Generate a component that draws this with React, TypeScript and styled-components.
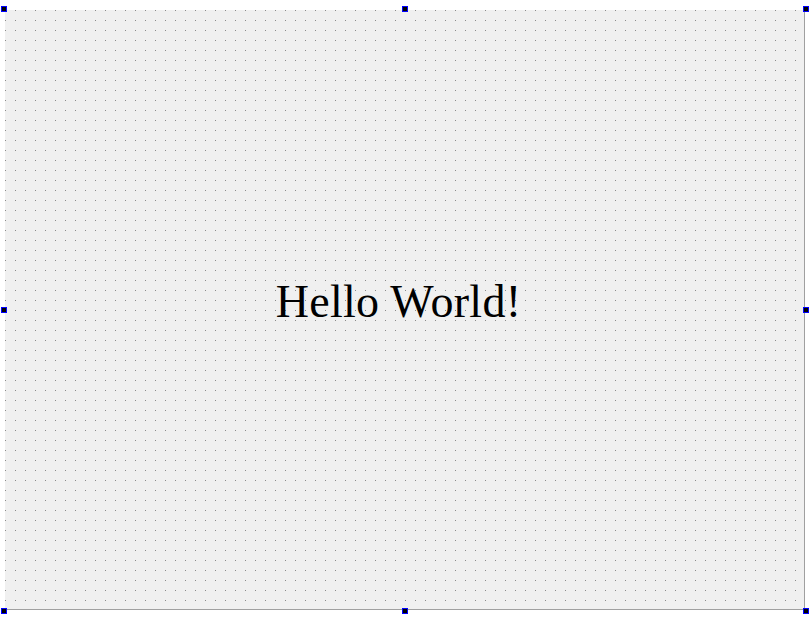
import React from 'react'
import styled, { createGlobalStyle } from 'styled-components'

const GlobalStyle = createGlobalStyle`
  html, body {
    margin: 0;
    padding: 0;
    background: #fff;
  }
`

const Workspace = styled.div`
  padding: 10px 0 0 5px;
  width: 812px;
  height: 618px;
  box-sizing: border-box;
  background: #fff;
`

const FormCanvas = styled.div`
  position: relative;
  width: 800px;
  height: 600px;
  display: flex;
  align-items: center;
  justify-content: center;
  padding: 0 12px 17px 0;
  box-sizing: border-box;
  border-right: 1px solid #a0a0a0;
  border-bottom: 1px solid #a0a0a0;
  background-color: #f0f0f0;
  background-image: linear-gradient(90deg, transparent 1px, #f0f0f0 1px),
    linear-gradient(180deg, #8a8a8a 1px, #f0f0f0 1px);
  background-size: 10px 10px;
  background-position: 0 0;
`

const Label = styled.span`
  font-family: 'Liberation Serif', 'Times New Roman', serif;
  font-size: 46px;
  letter-spacing: 0.3px;
  line-height: normal;
  color: #000;
`

const Handle = styled.span<{ $x: number; $y: number }>`
  position: absolute;
  left: ${(p) => p.$x}px;
  top: ${(p) => p.$y}px;
  width: 6px;
  height: 6px;
  box-sizing: border-box;
  border: 1px solid #0000ff;
  background: #000;
`

const handles = [
  { x: -4, y: -4 },
  { x: 397, y: -4 },
  { x: 798, y: -4 },
  { x: -4, y: 297 },
  { x: 798, y: 297 },
  { x: -4, y: 598 },
  { x: 397, y: 598 },
  { x: 798, y: 598 },
]

export default function App() {
  return (
    <>
      <GlobalStyle />
      <Workspace>
        <FormCanvas>
          <Label>Hello World!</Label>
          {handles.map((h, i) => (
            <Handle key={i} $x={h.x} $y={h.y} />
          ))}
        </FormCanvas>
      </Workspace>
    </>
  )
}
